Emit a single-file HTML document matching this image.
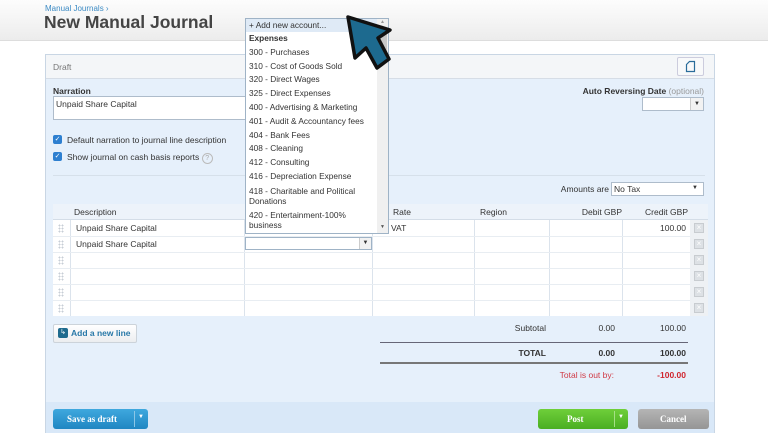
<!DOCTYPE html>
<html><head><style>
*{margin:0;padding:0;box-sizing:border-box}
body{width:768px;height:433px;overflow:hidden;background:#fff;font-family:"Liberation Sans",sans-serif;font-size:8.5px;color:#333;position:relative}
.a{position:absolute}
.r{position:absolute;text-align:right}
.hdr{left:0;top:0;width:768px;height:41px;background:linear-gradient(#fdfdfd,#ececec);border-bottom:1px solid #ddd}
.panel{left:45px;top:54px;width:670px;height:379px;background:#e6f0fb;border:1px solid #c9d6e4}
.drafthdr{left:46px;top:55px;width:668px;height:24px;background:#f4f6f8;border-bottom:1px solid #d6dde6}
.foot{left:46px;top:402px;width:668px;height:31px;background:#d9e8f8}
.dd div{height:13.8px;line-height:13.8px;padding-left:4px;white-space:nowrap}
.x{position:absolute;left:694px;width:10px;height:10px;background:#dde1e5;border:1px solid #c8ccd0;color:#fff;font-size:8px;line-height:8px;text-align:center}
.dots{position:absolute;left:58px;width:6px;height:9px;background-image:radial-gradient(#c7ced6 45%,transparent 50%);background-size:3px 3px}
</style></head><body>
<div class="a hdr"></div>
<div class="a" style="left:45px;top:4px;color:#3c8bc4;font-size:8px">Manual Journals ›</div>
<div class="a" style="left:44px;top:12px;font-weight:bold;font-size:17.5px;color:#444">New Manual Journal</div>

<div class="a panel"></div>
<div class="a drafthdr"></div>
<div class="a" style="left:53px;top:62px;color:#777">Draft</div>
<div class="a" style="left:677px;top:57px;width:27px;height:19px;background:#f8f9fa;border:1px solid #ccd;border-radius:2px"></div>
<svg class="a" style="left:685px;top:60px" width="11" height="13" viewBox="0 0 11 13"><path d="M1.5 4.5 L4.5 1.5 L9.5 1.5 L9.5 11.5 L1.5 11.5 Z" fill="none" stroke="#2a6c9a" stroke-width="1.2"/></svg>

<div class="a" style="left:53px;top:86px;font-weight:bold;color:#333">Narration</div>
<div class="a" style="left:53px;top:96px;width:200px;height:24px;background:#fff;border:1px solid #aebccb;padding:2px">Unpaid Share Capital</div>
<div class="a" style="left:53px;top:135px;width:9px;height:9px;background:#2d7fd0;border-radius:2px;color:#fff;font-size:7px;line-height:9px;text-align:center">✓</div>
<div class="a" style="left:67px;top:135px">Default narration to journal line description</div>
<div class="a" style="left:53px;top:152px;width:9px;height:9px;background:#2d7fd0;border-radius:2px;color:#fff;font-size:7px;line-height:9px;text-align:center">✓</div>
<div class="a" style="left:67px;top:152px">Show journal on cash basis reports <span style="display:inline-block;width:11px;height:11px;border:1px solid #bbb;border-radius:50%;text-align:center;color:#aaa;font-size:7px;line-height:10px">?</span></div>
<div class="a" style="left:53px;top:175px;width:652px;height:1px;background:#d6e0ea"></div>

<div class="r" style="right:64px;top:86px;font-weight:bold;white-space:nowrap">Auto Reversing Date <span style="font-weight:normal;color:#999">(optional)</span></div>
<div class="a" style="left:642px;top:97px;width:62px;height:14px;background:#fff;border:1px solid #aebccb"></div>
<div class="a" style="left:690px;top:98px;width:13px;height:12px;background:#f2f2f2;border-left:1px solid #ccc;font-size:6px;text-align:center;line-height:12px">▼</div>

<div class="r" style="right:159px;top:184px">Amounts are</div>
<div class="a" style="left:611px;top:182px;width:93px;height:14px;background:#fff;border:1px solid #aebccb;padding-left:2px;line-height:12px">No Tax</div>
<div class="a" style="left:692px;top:185px;font-size:6px">▼</div>

<div class="a" style="left:53px;top:204px;width:655px;height:16px;background:#edf3fa;border-bottom:1px solid #d4dde7"></div>
<div class="a" style="left:74px;top:207px">Description</div>
<div class="a" style="left:393px;top:207px">Rate</div>
<div class="a" style="left:480px;top:207px">Region</div>
<div class="r" style="right:146px;top:207px">Debit GBP</div>
<div class="r" style="right:80px;top:207px">Credit GBP</div>
<div class="a" style="left:53px;top:220px;width:637px;height:96px;background:#fff"></div>
<div class="a" style="left:690px;top:220px;width:18px;height:96px;background:#eef1f4"></div>
<div class="a" style="left:70px;top:220px;width:1px;height:96px;background:#dbe3ec"></div>
<div class="a" style="left:244px;top:220px;width:1px;height:96px;background:#dbe3ec"></div>
<div class="a" style="left:372px;top:220px;width:1px;height:96px;background:#dbe3ec"></div>
<div class="a" style="left:474px;top:220px;width:1px;height:96px;background:#dbe3ec"></div>
<div class="a" style="left:549px;top:220px;width:1px;height:96px;background:#dbe3ec"></div>
<div class="a" style="left:622px;top:220px;width:1px;height:96px;background:#dbe3ec"></div>
<div class="a" style="left:53px;top:236px;width:637px;height:1px;background:#e8edf2"></div>
<div class="a" style="left:53px;top:252px;width:637px;height:1px;background:#e8edf2"></div>
<div class="a" style="left:53px;top:268px;width:637px;height:1px;background:#e8edf2"></div>
<div class="a" style="left:53px;top:284px;width:637px;height:1px;background:#e8edf2"></div>
<div class="a" style="left:53px;top:300px;width:637px;height:1px;background:#e8edf2"></div>
<div class="dots" style="top:224px"></div><div class="dots" style="top:240px"></div><div class="dots" style="top:256px"></div><div class="dots" style="top:272px"></div><div class="dots" style="top:288px"></div><div class="dots" style="top:304px"></div>
<div class="x" style="top:223px">×</div><div class="x" style="top:239px">×</div><div class="x" style="top:255px">×</div><div class="x" style="top:271px">×</div><div class="x" style="top:287px">×</div><div class="x" style="top:303px">×</div>
<div class="a" style="left:76px;top:223px">Unpaid Share Capital</div>
<div class="a" style="left:76px;top:239px">Unpaid Share Capital</div>
<div class="a" style="left:391px;top:223px">VAT</div>
<div class="r" style="right:82px;top:223px">100.00</div>
<div class="a" style="left:245px;top:237px;width:127px;height:13px;background:#fff;border:1px solid #9fb3c6"></div>
<div class="a" style="left:359px;top:238px;width:12px;height:11px;background:#f2f2f2;border-left:1px solid #ccc;font-size:6px;text-align:center;line-height:11px">▼</div>

<div class="a" style="left:53px;top:324px;width:84px;height:19px;background:linear-gradient(#fff,#eceef0);border:1px solid #ccd3da;border-radius:2px"></div>
<div class="a" style="left:58px;top:328px;width:10px;height:10px;background:#1f6b8e;border-radius:2px;color:#fff;font-size:7px;line-height:10px;text-align:center">↳</div>
<div class="a" style="left:71px;top:328px;font-weight:bold;color:#2878a8">Add a new line</div>

<div class="r" style="right:222px;top:323px">Subtotal</div>
<div class="r" style="right:153px;top:323px">0.00</div>
<div class="r" style="right:82px;top:323px">100.00</div>
<div class="a" style="left:380px;top:342px;width:308px;height:1px;background:#667"></div>
<div class="r" style="right:222px;top:348px;font-weight:bold">TOTAL</div>
<div class="r" style="right:153px;top:348px;font-weight:bold">0.00</div>
<div class="r" style="right:82px;top:348px;font-weight:bold">100.00</div>
<div class="a" style="left:380px;top:362px;width:308px;height:2px;background:#777"></div>
<div class="r" style="right:154px;top:370px;color:#d03a45">Total is out by:</div>
<div class="r" style="right:82px;top:370px;color:#d0262f;font-weight:bold">-100.00</div>

<div class="a foot"></div>
<div class="a" style="left:53px;top:409px;width:95px;height:20px;background:linear-gradient(#3fa8de,#1f86c2);border-radius:3px"></div>
<div class="a" style="left:67px;top:414px;color:#fff;font-weight:bold;font-family:'Liberation Serif',serif;font-size:9px">Save as draft</div>
<div class="a" style="left:134px;top:411px;width:1px;height:16px;background:#8cc6e6"></div>
<div class="a" style="left:138px;top:414px;color:#fff;font-size:6px">▼</div>
<div class="a" style="left:538px;top:409px;width:90px;height:20px;background:linear-gradient(#6fcf3a,#4aae22);border-radius:3px"></div>
<div class="a" style="left:567px;top:414px;color:#fff;font-weight:bold;font-family:'Liberation Serif',serif;font-size:9px">Post</div>
<div class="a" style="left:614px;top:411px;width:1px;height:16px;background:#a5e085"></div>
<div class="a" style="left:618px;top:414px;color:#fff;font-size:6px">▼</div>
<div class="a" style="left:638px;top:409px;width:71px;height:20px;background:linear-gradient(#b5b5b5,#959595);border-radius:3px"></div>
<div class="a" style="left:660px;top:414px;color:#fff;font-weight:bold;font-family:'Liberation Serif',serif;font-size:9px">Cancel</div>

<div class="a" style="left:245px;top:18px;width:144px;height:216px;background:#fff;border:1px solid #9fb3c6"></div>
<div class="a" style="left:246px;top:19px;width:131px;height:13px;background:#dfeaf6"></div>
<div class="a" style="left:377px;top:19px;width:11px;height:214px;background:#f0f0f0"></div>
<div class="a" style="left:378px;top:31px;width:9px;height:28px;background:#c8c8c8"></div>
<div class="a" style="left:380px;top:19px;font-size:5px;color:#999">▲</div>
<div class="a" style="left:380px;top:224px;font-size:5px;color:#555">▼</div>
<div class="a dd" style="left:245px;top:19px;width:132px;font-size:8.3px;color:#333">
<div style="height:13px;line-height:13px">+ Add new account...</div>
<div style="font-weight:bold">Expenses</div>
<div>300 - Purchases</div><div>310 - Cost of Goods Sold</div><div>320 - Direct Wages</div><div>325 - Direct Expenses</div><div>400 - Advertising &amp; Marketing</div><div>401 - Audit &amp; Accountancy fees</div><div>404 - Bank Fees</div><div>408 - Cleaning</div><div>412 - Consulting</div><div>416 - Depreciation Expense</div>
<div style="height:auto;line-height:10px;white-space:normal;padding-top:2px;padding-bottom:2px">418 - Charitable and Political Donations</div>
<div style="height:auto;line-height:10px;white-space:normal;padding-top:2px">420 - Entertainment-100% business</div>
</div>

<svg class="a" style="left:340px;top:10px" width="54" height="62" viewBox="0 0 54 62">
<path d="M8 7 L50 20 L38 28 L49 49 L37 58 L26 38 L15 48 Z" fill="#1d6a8f" stroke="#111" stroke-width="3.5" stroke-linejoin="round"/>
</svg>
</body></html>
